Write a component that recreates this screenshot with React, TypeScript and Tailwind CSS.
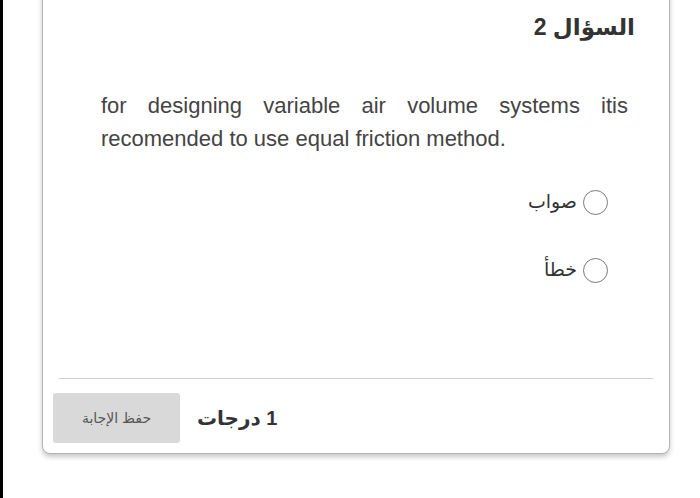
export default function App() {
  return (
    <div className="w-[700px] h-[498px] bg-white flex overflow-hidden font-['Liberation_Sans','DejaVu_Sans',sans-serif]">
      <div className="w-[3px] h-full bg-black shrink-0" />
      <div className="ml-[39px] mt-[-10px] w-[628px] h-[464px] shrink-0 bg-white border border-[#b3b3b3] rounded-b-[8px] shadow-[0_3px_5px_rgba(0,0,0,0.22)] flex flex-col" dir="rtl">
        <h2 className="pt-[20px] pr-[34px] text-[23px] leading-[32px] font-bold text-[#333]">السؤال 2</h2>

        <p dir="ltr" className="mt-[46px] pl-[58px] pr-[41px] text-[22px] leading-[33px] text-[#444] text-justify">
          for designing variable air volume systems itis recomended to use equal friction method.
        </p>

        <div className="mt-[35px] pr-[61px] flex flex-col gap-[43px]">
          {['صواب', 'خطأ'].map((label) => (
            <label key={label} className="flex items-center gap-[6px] h-[25px]">
              <span className="w-[25px] h-[25px] rounded-full border-[1.5px] border-[#7a7a7a] bg-white shrink-0" />
              <span className="text-[19px] text-[#333]">{label}</span>
            </label>
          ))}
        </div>

        <div className="mt-auto">
          <div className="mx-[16px] border-t border-[#d0d0d0]" />
          <div dir="ltr" className="flex items-center gap-[17px] pl-[10px] pt-[14px] pb-[10px]">
            <button className="w-[127px] h-[50px] bg-[#d9d9d9] rounded-[3px] text-[14px] text-[#555]" dir="rtl">
              حفظ الإجابة
            </button>
            <span dir="rtl" className="text-[20px] font-bold text-[#333]">1 درجات</span>
          </div>
        </div>
      </div>
    </div>
  );
}
